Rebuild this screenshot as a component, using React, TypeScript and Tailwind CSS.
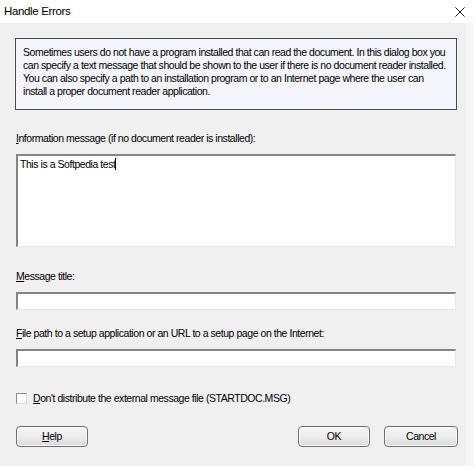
import * as React from "react";

const ui = "font-['Liberation_Sans',Arial,sans-serif] text-[10.5px] tracking-[-0.45px] leading-[13px] text-black";

// Win32-style sunken edit field
const sunken =
  "bg-white border-t-2 border-l-2 border-r border-b border-t-[#858585] border-l-[#858585] border-r-[#e6e6e6] border-b-[#e6e6e6]";

function Mnemonic({ first, rest }: { first: string; rest: string }) {
  return (
    <span>
      <span className="underline underline-offset-[1px]">{first}</span>
      {rest}
    </span>
  );
}

function Button({ children, className }: { children: React.ReactNode; className?: string }) {
  return (
    <button
      className={`h-[21px] rounded-[4px] border border-[#6f6f6f] bg-gradient-to-b from-[#f6f6f6] via-[#ececec] to-[#dadada] shadow-[inset_0_0_0_1px_#fbfbfb] ${ui} ${className ?? ""}`}
    >
      {children}
    </button>
  );
}

export default function App() {
  return (
    <div className="w-[474px] h-[466px] flex flex-col bg-white overflow-hidden">
      {/* title bar */}
      <div className="h-[23px] shrink-0 flex items-center justify-between pl-[4px] pr-[9px] bg-white">
        <span className="font-['Liberation_Sans',sans-serif] text-[11.5px] tracking-[-0.35px] text-black">Handle Errors</span>
        <svg width="10" height="10" viewBox="0 0 10 10">
          <path d="M0.5 0.5 L9.5 9.5 M9.5 0.5 L0.5 9.5" stroke="#111" strokeWidth="1" />
        </svg>
      </div>

      <div className="flex-1 flex bg-[#f0f0f0]">
        <div className="w-[466px] flex flex-col pl-[15px] pr-[9px] pt-[15px]">
          <div className={`h-[72px] border border-[#4a4a4a] bg-[#f5f5fd] pl-[7px] pr-[4px] pt-[7px] ${ui} leading-[12px] whitespace-nowrap`}>
            Sometimes users do not have a program installed that can read the document. In this dialog box you
            <br />
            can specify a text message that should be shown to the user if there is no document reader installed.
            <br />
            You can also specify a path to an installation program or to an Internet page where the user can
            <br />
            install a proper document reader application.
          </div>

          <div className={`mt-[22px] pl-[1px] ${ui}`}>
            <Mnemonic first="I" rest="nformation message (if no document reader is installed):" />
          </div>
          <div className={`mt-[9px] ml-[1px] mr-[1px] h-[93px] ${sunken} pl-[2px] pt-[2px] ${ui}`}>
            This is a Softpedia test<span className="inline-block w-px h-[12px] bg-black align-[-2px]" />
          </div>

          <div className={`mt-[23px] pl-[1px] ${ui}`}>
            <Mnemonic first="M" rest="essage title:" />
          </div>
          <div className={`mt-[9px] ml-[1px] mr-[1px] h-[18px] ${sunken}`} />

          <div className={`mt-[17px] pl-[1px] ${ui}`}>
            <Mnemonic first="F" rest="ile path to a setup application or an URL to a setup page on the Internet:" />
          </div>
          <div className={`mt-[9px] ml-[1px] mr-[1px] h-[18px] ${sunken}`} />

          <div className={`mt-[25px] ml-[1px] flex items-center gap-[6px] ${ui}`}>
            <span className="w-[11px] h-[11px] bg-white border border-t-[#8a8a8a] border-l-[#8a8a8a] border-r-[#dcdcdc] border-b-[#dcdcdc]" />
            <span>
              <Mnemonic first="D" rest="on't distribute the external message file (STARTDOC.MSG)" />
            </span>
          </div>

          <div className="mt-[21px] flex items-center">
            <Button className="ml-[1px] w-[72px]">
              <Mnemonic first="H" rest="elp" />
            </Button>
            <div className="flex-1" />
            <Button className="w-[72px]">OK</Button>
            <Button className="ml-[14px] mr-[-1px] w-[74px]">Cancel</Button>
          </div>
        </div>
        <div className="flex-1 bg-[#f6f6f6]" />
      </div>
    </div>
  );
}
